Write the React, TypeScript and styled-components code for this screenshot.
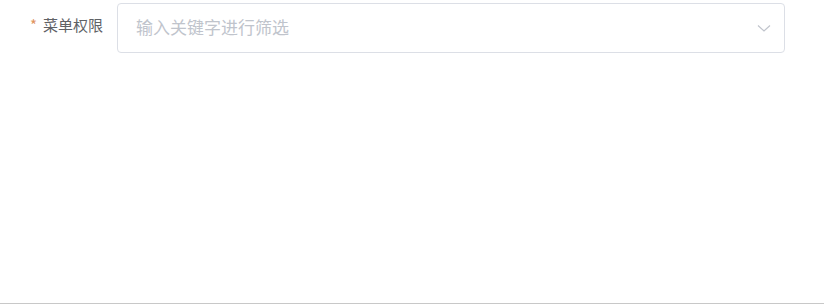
import React from 'react';
import styled, { createGlobalStyle } from 'styled-components';

const GlobalStyle = createGlobalStyle`
	html, body {
		margin: 0;
		padding: 0;
		background: #fff;
	}
	body {
		font-family: "Noto Sans CJK SC", "Liberation Sans", sans-serif;
	}
`;

const Page = styled.div`
	width: 824px;
	height: 304px;
	box-sizing: border-box;
	border-bottom: 1px solid #c8c8c8;
	padding-top: 3px;
`;

const FormItem = styled.div`
	display: flex;
	align-items: center;
`;

const Label = styled.label`
	width: 117px;
	box-sizing: border-box;
	padding-right: 14px;
	margin-bottom: 6px;
	text-align: right;
	font-size: 15px;
	line-height: 20px;
	color: #606266;
	&::before {
		content: '*';
		color: #e0935f;
		margin-right: 6px;
	}
`;

const Select = styled.div`
	width: 668px;
	height: 50px;
	box-sizing: border-box;
	border: 1px solid #dcdfe6;
	border-radius: 4px;
	display: flex;
	align-items: center;
	padding: 0 12px 3px 18px;
	cursor: pointer;
`;

const Placeholder = styled.span`
	flex: 1;
	font-size: 17px;
	line-height: 22px;
	color: #c0c4cc;
`;

const Arrow = styled.svg`
	width: 16px;
	height: 16px;
	margin-top: 3px;
`;

export default function App() {
	return <>
		<GlobalStyle/>
		<Page>
			<FormItem>
				<Label>菜单权限</Label>
				<Select>
					<Placeholder>输入关键字进行筛选</Placeholder>
					<Arrow viewBox="0 0 16 16" fill="none">
						<path d="M2 5.5 L8 11 L14 5.5" stroke="#c0c4cc" strokeWidth="1.2"/>
					</Arrow>
				</Select>
			</FormItem>
		</Page>
	</>;
}
